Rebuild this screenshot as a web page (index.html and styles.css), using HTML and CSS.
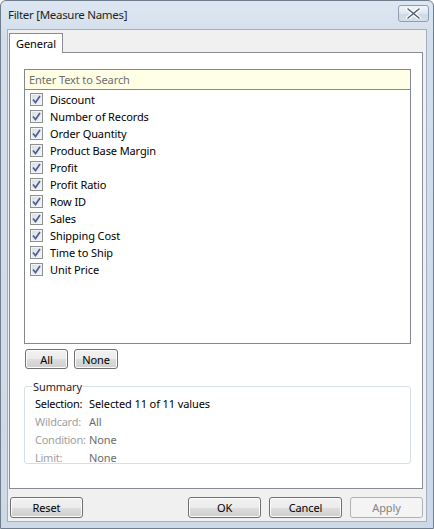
FILE: index.html
```html
<!DOCTYPE html>
<html lang="en">
<head>
  <meta charset="UTF-8" />
  <title>Filter [Measure Names]</title>
  <link rel="stylesheet" href="styles.css">
</head>
<body>

  <div class="window">
    <!-- Title bar -->
    <div class="titlebar">
      <span class="title">Filter [Measure Names]</span>
      <button class="close-btn" aria-label="Close">
        <svg width="15" height="11" viewBox="0 0 15 11">
          <path d="M2 1 L13 10 M13 1 L2 10" stroke="#ffffff" stroke-width="4" stroke-linecap="round"/>
          <path d="M2 1 L13 10 M13 1 L2 10" stroke="#56606e" stroke-width="1.6" stroke-linecap="round"/>
        </svg>
      </button>
    </div>

    <div class="client">
      <!-- Tabs -->
      <div class="tabs">
        <div class="tab active">General</div>
      </div>

      <div class="tab-panel">
        <div class="filter-list">
          <input class="search" type="text" placeholder="Enter Text to Search" />
          <div class="values">
            <label class="value"><span class="check"><svg viewBox="0 0 9 9"><path d="M1 4.5 L3.5 7.5 L8 1" /></svg></span>Discount</label>
            <label class="value"><span class="check"><svg viewBox="0 0 9 9"><path d="M1 4.5 L3.5 7.5 L8 1" /></svg></span>Number of Records</label>
            <label class="value"><span class="check"><svg viewBox="0 0 9 9"><path d="M1 4.5 L3.5 7.5 L8 1" /></svg></span>Order Quantity</label>
            <label class="value"><span class="check"><svg viewBox="0 0 9 9"><path d="M1 4.5 L3.5 7.5 L8 1" /></svg></span>Product Base Margin</label>
            <label class="value"><span class="check"><svg viewBox="0 0 9 9"><path d="M1 4.5 L3.5 7.5 L8 1" /></svg></span>Profit</label>
            <label class="value"><span class="check"><svg viewBox="0 0 9 9"><path d="M1 4.5 L3.5 7.5 L8 1" /></svg></span>Profit Ratio</label>
            <label class="value"><span class="check"><svg viewBox="0 0 9 9"><path d="M1 4.5 L3.5 7.5 L8 1" /></svg></span>Row ID</label>
            <label class="value"><span class="check"><svg viewBox="0 0 9 9"><path d="M1 4.5 L3.5 7.5 L8 1" /></svg></span>Sales</label>
            <label class="value"><span class="check"><svg viewBox="0 0 9 9"><path d="M1 4.5 L3.5 7.5 L8 1" /></svg></span>Shipping Cost</label>
            <label class="value"><span class="check"><svg viewBox="0 0 9 9"><path d="M1 4.5 L3.5 7.5 L8 1" /></svg></span>Time to Ship</label>
            <label class="value"><span class="check"><svg viewBox="0 0 9 9"><path d="M1 4.5 L3.5 7.5 L8 1" /></svg></span>Unit Price</label>
          </div>
        </div>

        <div class="list-actions">
          <button class="btn btn-all">All</button>
          <button class="btn btn-none">None</button>
        </div>

        <!-- Summary -->
        <fieldset class="summary">
          <legend>Summary</legend>
          <div class="summary-row"><span class="key">Selection:</span><span>Selected 11 of 11 values</span></div>
          <div class="summary-row muted"><span class="key">Wildcard:</span><span class="val">All</span></div>
          <div class="summary-row muted"><span class="key">Condition:</span><span class="val">None</span></div>
          <div class="summary-row muted"><span class="key">Limit:</span><span class="val">None</span></div>
        </fieldset>
      </div>

      <!-- Dialog buttons -->
      <div class="dialog-actions">
        <button class="btn btn-wide">Reset</button>
        <div class="spacer"></div>
        <button class="btn btn-wide">OK</button>
        <button class="btn btn-wide">Cancel</button>
        <button class="btn btn-wide" disabled>Apply</button>
      </div>
    </div>
  </div>

</body>
</html>
```

FILE: styles.css
```css
body {
  margin: 0;
  font-family: "Noto Sans", "Open Sans", sans-serif;
  font-size: 11px;
  letter-spacing: -0.1px;
  color: #000000;
  background-color: #ffffff;
}

/* Window frame */
.window {
  width: 434px;
  height: 529px;
  box-sizing: border-box;
  border: 1px solid #6f7d8e;
  border-radius: 6px 6px 0 0;
  background: linear-gradient(#dde7f2, #d3deeb 40px, #cdd9e7);
  padding: 0 6px 6px;
  display: flex;
  flex-direction: column;
}

.titlebar {
  height: 28px;
  display: flex;
  align-items: center;
  justify-content: space-between;
}

.title {
  padding-left: 1px;
  color: #1e1e1e;
  font-size: 11.5px;
  letter-spacing: -0.3px;
  line-height: 1;
  margin-top: -1px;
}

.close-btn {
  width: 31px;
  height: 17px;
  margin-top: -4px;
  margin-right: -2px;
  padding: 0;
  border: 1px solid #8d9cb0;
  border-radius: 3px;
  background: linear-gradient(#f1f5fa, #dde6f0 50%, #ccd8e6 51%, #d6e0ec);
  display: flex;
  align-items: center;
  justify-content: center;
}

.client {
  flex: 1;
  border: 1px solid #a0afc2;
  background-color: #f0f0f0;
  padding: 3px 3px 0 1px;
  display: flex;
  flex-direction: column;
}

/* Tabs */
.tabs {
  display: flex;
  position: relative;
  z-index: 1;
}

.tab {
  width: 54px;
  height: 20px;
  box-sizing: border-box;
  border: 1px solid #898c95;
  border-bottom: none;
  background: #ffffff;
  text-align: center;
  line-height: 19px;
  margin-bottom: -1px;
}

.tab-panel {
  height: 437px;
  box-sizing: border-box;
  border: 1px solid #898c95;
  background: #ffffff;
  padding: 16px 11px 0 14px;
}

/* Filter values list */
.filter-list {
  height: 275px;
  box-sizing: border-box;
  border: 1px solid #828790;
  display: flex;
  flex-direction: column;
}

.search {
  height: 20px;
  box-sizing: border-box;
  border: none;
  border-bottom: 1px solid #828790;
  background: #ffffe6;
  padding: 0 4px;
  font: inherit;
  letter-spacing: inherit;
  outline: none;
}

.search::placeholder {
  color: #6d6d6d;
}

.values {
  flex: 1;
  padding-top: 1px;
  background: #ffffff;
}

.value {
  height: 17px;
  display: flex;
  align-items: center;
  padding-left: 5px;
  gap: 7px;
}

.check {
  width: 13px;
  height: 13px;
  box-sizing: border-box;
  border: 1px solid #8e8f8f;
  background: linear-gradient(135deg, #d9dde3, #f4f6f8);
  box-shadow: inset 0 0 0 1px #f2f4f6;
  display: flex;
  align-items: center;
  justify-content: center;
}

.check svg {
  width: 9px;
  height: 9px;
  fill: none;
  stroke: #4d6095;
  stroke-width: 1.7;
}

/* Buttons */
.btn {
  font: inherit;
  letter-spacing: inherit;
  color: #000000;
  height: 20px;
  padding: 0;
  border: 1px solid #707070;
  border-radius: 3px;
  background: linear-gradient(#f2f2f2, #ebebeb 50%, #dddddd 51%, #cfcfcf);
  box-shadow: inset 0 0 0 1px #fcfcfc;
}

.btn:disabled {
  color: #838383;
  border-color: #adb2b5;
  background: #f4f4f4;
  box-shadow: none;
}

.list-actions {
  display: flex;
  gap: 6px;
  margin: 5px 0 0 1px;
}

.btn-all {
  width: 43px;
}

.btn-none {
  width: 44px;
}

/* Summary group */
.summary {
  margin: 10px 0 0;
  padding: 0 0 3px 10px;
  height: 85px;
  box-sizing: border-box;
  border: 1px solid #d5dfe5;
  border-radius: 3px;
}

.summary legend {
  padding: 0 1px;
  margin-left: -3px;
  color: #1e1e1e;
}

.summary-row {
  height: 18px;
  display: flex;
  align-items: center;
  white-space: nowrap;
}

.summary-row .key {
  width: 54px;
  flex-shrink: 0;
  letter-spacing: -0.25px;
}

.summary-row.muted .key {
  color: #a0a0a0;
}

.summary-row .val {
  color: #6d6d6d;
}

/* Dialog footer */
.dialog-actions {
  display: flex;
  gap: 8px;
  padding: 8px 0 0 1px;
}

.btn-wide {
  width: 73px;
  height: 21px;
}

.spacer {
  flex: 1;
}
```
